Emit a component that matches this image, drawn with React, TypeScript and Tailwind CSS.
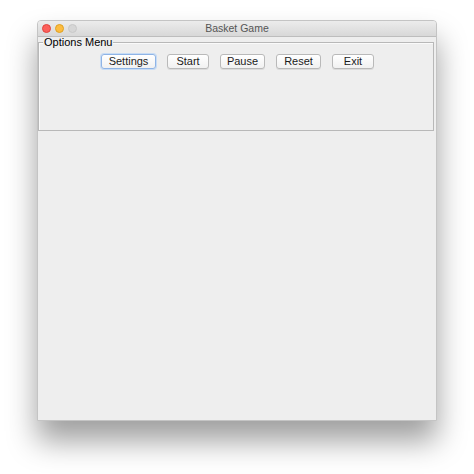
import React from "react";

const font = { fontFamily: '"Liberation Sans", Arial, sans-serif' };

function Btn({ label, w, focused = false }: { label: string; w: number; focused?: boolean }) {
  return (
    <button
      style={{ width: w }}
      className={`h-[15px] rounded-[3px] border bg-gradient-to-b from-white to-[#f1f1f1] text-[11px] leading-[13px] text-[#1a1a1a] shadow-[0_1px_0_rgba(0,0,0,0.08)] ${
        focused ? "border-[#8fb4e6] ring-1 ring-[#c7dcf5]" : "border-[#b9b9b9]"
      }`}
    >
      {label}
    </button>
  );
}

export default function App() {
  return (
    <div className="h-[474px] w-[474px] bg-white pl-[37px] pt-[20px]" style={font}>
      <div className="flex h-[401px] w-[400px] flex-col overflow-hidden rounded-t-[4px] border border-[#c4c4c4] bg-[#eeeeee] shadow-[0_20px_30px_rgba(0,0,0,0.38)]">
        <div className="relative flex h-[16px] shrink-0 items-center justify-center border-b border-[#bdbdbd] bg-gradient-to-b from-[#ececec] to-[#d8d8d8]">
          <div className="absolute left-[4px] top-[3px] flex gap-[4px]">
            <span className="size-[9px] rounded-full border border-[#e0443e] bg-[#fc605b]" />
            <span className="size-[9px] rounded-full border border-[#dea123] bg-[#fdbc40]" />
            <span className="size-[9px] rounded-full border border-[#c8c8c8] bg-[#d6d6d6]" />
          </div>
          <span className="text-[10.5px] text-[#555555]">Basket Game</span>
        </div>
        <div className="relative mt-[5px] mr-[2px] h-[89px] border border-[#b8b8b8] shadow-[inset_1px_1px_0_#fafafa]">
          <span className="absolute left-[4px] top-[-6px] bg-[#eeeeee] px-[1px] text-[11px] leading-[11px] text-black">
            Options Menu
          </span>
          <div className="mt-[11px] flex gap-[11px] pl-[62px]">
            <Btn label="Settings" w={55} focused />
            <Btn label="Start" w={42} />
            <Btn label="Pause" w={45} />
            <Btn label="Reset" w={45} />
            <Btn label="Exit" w={42} />
          </div>
        </div>
      </div>
    </div>
  );
}
